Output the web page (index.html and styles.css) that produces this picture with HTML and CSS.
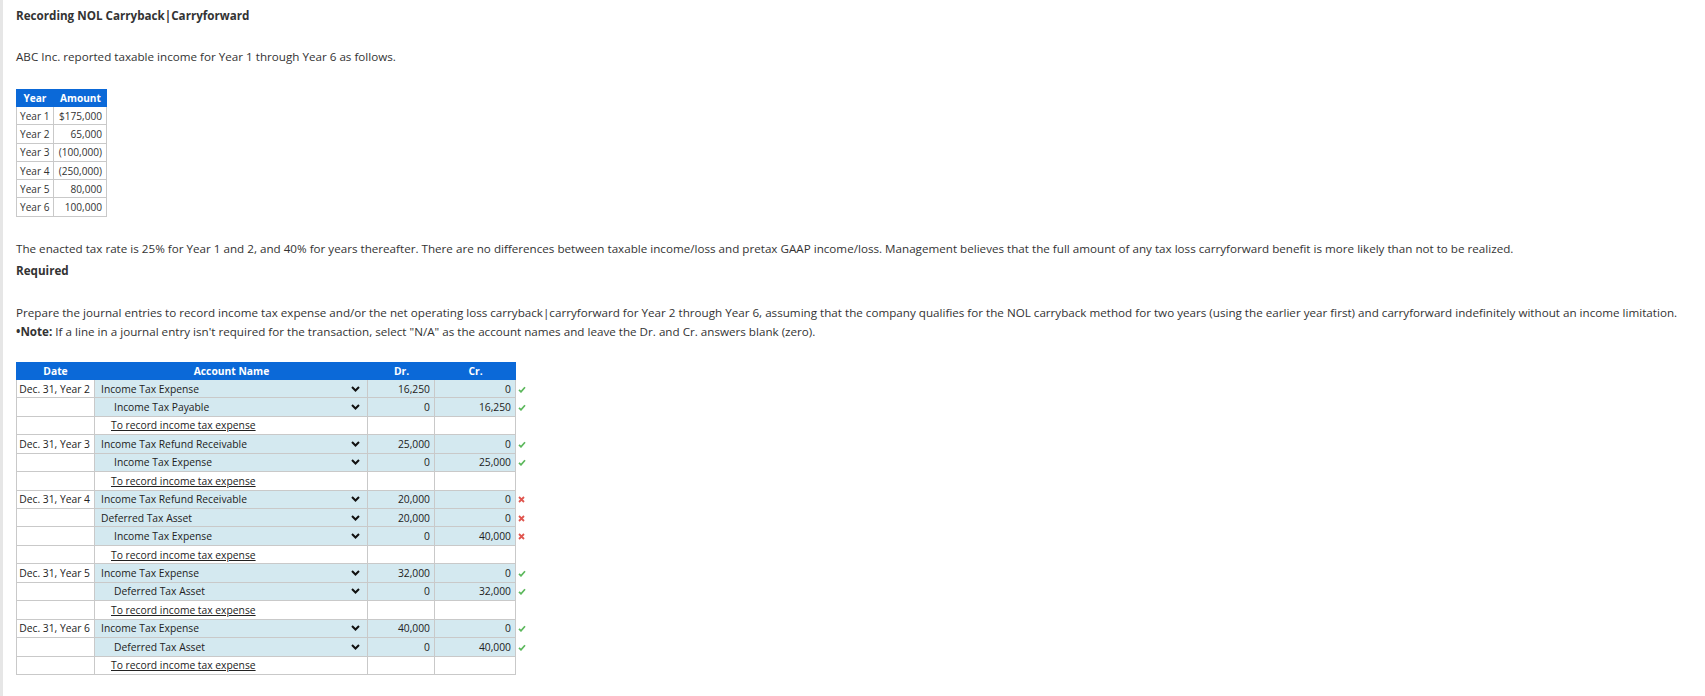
FILE: index.html
```html
<!DOCTYPE html>
<html lang="en">
<head>
<meta charset="utf-8">
<title>Recording NOL Carryback|Carryforward</title>
<link rel="stylesheet" href="styles.css">
</head>
<body>
<div class="frame">
  <h1 class="title">Recording NOL Carryback|Carryforward</h1>
  <p class="intro">ABC Inc. reported taxable income for Year 1 through Year 6 as follows.</p>

  <div class="income">
    <div class="ih">Year</div><div class="ih">Amount</div>
    <div class="ic yr">Year 1</div><div class="ic amt">$175,000</div>
    <div class="ic yr">Year 2</div><div class="ic amt">65,000</div>
    <div class="ic yr">Year 3</div><div class="ic amt">(100,000)</div>
    <div class="ic yr">Year 4</div><div class="ic amt">(250,000)</div>
    <div class="ic yr">Year 5</div><div class="ic amt">80,000</div>
    <div class="ic yr">Year 6</div><div class="ic amt">100,000</div>
  </div>

  <p class="rate">The enacted tax rate is 25% for Year 1 and 2, and 40% for years thereafter. There are no differences between taxable income/loss and pretax GAAP income/loss. Management believes that the full amount of any tax loss carryforward benefit is more likely than not to be realized.</p>
  <p class="req">Required</p>
  <p class="prepare">Prepare the journal entries to record income tax expense and/or the net operating loss carryback|carryforward for Year 2 through Year 6, assuming that the company qualifies for the NOL carryback method for two years (using the earlier year first) and carryforward indefinitely without an income limitation.<br><b>•Note:</b> If a line in a journal entry isn't required for the transaction, select "N/A" as the account names and leave the Dr. and Cr. answers blank (zero).</p>

  <div class="journal">
    <div class="jh">Date</div><div class="jh">Account Name</div><div class="jh">Dr.</div><div class="jh">Cr.</div><div class="mk"></div>

    <!-- Year 2 -->
    <div class="c date">Dec. 31, Year 2</div><div class="c acct">Income Tax Expense<svg class="chev" viewBox="0 0 9 6"><polyline points="1,1 4.5,4.5 8,1"/></svg></div><div class="c num">16,250</div><div class="c num">0</div><div class="mk"><svg class="ok" viewBox="0 0 8 7"><polyline points="1,3.8 3,5.8 7,1.2"/></svg></div>
    <div class="c date"></div><div class="c acct cr">Income Tax Payable<svg class="chev" viewBox="0 0 9 6"><polyline points="1,1 4.5,4.5 8,1"/></svg></div><div class="c num">0</div><div class="c num">16,250</div><div class="mk"><svg class="ok" viewBox="0 0 8 7"><polyline points="1,3.8 3,5.8 7,1.2"/></svg></div>
    <div class="c date"></div><div class="c memo"><span>To record income tax expense</span></div><div class="c blank"></div><div class="c blank"></div><div class="mk"></div>

    <!-- Year 3 -->
    <div class="c date">Dec. 31, Year 3</div><div class="c acct">Income Tax Refund Receivable<svg class="chev" viewBox="0 0 9 6"><polyline points="1,1 4.5,4.5 8,1"/></svg></div><div class="c num">25,000</div><div class="c num">0</div><div class="mk"><svg class="ok" viewBox="0 0 8 7"><polyline points="1,3.8 3,5.8 7,1.2"/></svg></div>
    <div class="c date"></div><div class="c acct cr">Income Tax Expense<svg class="chev" viewBox="0 0 9 6"><polyline points="1,1 4.5,4.5 8,1"/></svg></div><div class="c num">0</div><div class="c num">25,000</div><div class="mk"><svg class="ok" viewBox="0 0 8 7"><polyline points="1,3.8 3,5.8 7,1.2"/></svg></div>
    <div class="c date"></div><div class="c memo"><span>To record income tax expense</span></div><div class="c blank"></div><div class="c blank"></div><div class="mk"></div>

    <!-- Year 4 -->
    <div class="c date">Dec. 31, Year 4</div><div class="c acct">Income Tax Refund Receivable<svg class="chev" viewBox="0 0 9 6"><polyline points="1,1 4.5,4.5 8,1"/></svg></div><div class="c num">20,000</div><div class="c num">0</div><div class="mk"><svg class="bad" viewBox="0 0 7 7"><path d="M1,1 L6,6 M6,1 L1,6"/></svg></div>
    <div class="c date"></div><div class="c acct">Deferred Tax Asset<svg class="chev" viewBox="0 0 9 6"><polyline points="1,1 4.5,4.5 8,1"/></svg></div><div class="c num">20,000</div><div class="c num">0</div><div class="mk"><svg class="bad" viewBox="0 0 7 7"><path d="M1,1 L6,6 M6,1 L1,6"/></svg></div>
    <div class="c date"></div><div class="c acct cr">Income Tax Expense<svg class="chev" viewBox="0 0 9 6"><polyline points="1,1 4.5,4.5 8,1"/></svg></div><div class="c num">0</div><div class="c num">40,000</div><div class="mk"><svg class="bad" viewBox="0 0 7 7"><path d="M1,1 L6,6 M6,1 L1,6"/></svg></div>
    <div class="c date"></div><div class="c memo"><span>To record income tax expense</span></div><div class="c blank"></div><div class="c blank"></div><div class="mk"></div>

    <!-- Year 5 -->
    <div class="c date">Dec. 31, Year 5</div><div class="c acct">Income Tax Expense<svg class="chev" viewBox="0 0 9 6"><polyline points="1,1 4.5,4.5 8,1"/></svg></div><div class="c num">32,000</div><div class="c num">0</div><div class="mk"><svg class="ok" viewBox="0 0 8 7"><polyline points="1,3.8 3,5.8 7,1.2"/></svg></div>
    <div class="c date"></div><div class="c acct cr">Deferred Tax Asset<svg class="chev" viewBox="0 0 9 6"><polyline points="1,1 4.5,4.5 8,1"/></svg></div><div class="c num">0</div><div class="c num">32,000</div><div class="mk"><svg class="ok" viewBox="0 0 8 7"><polyline points="1,3.8 3,5.8 7,1.2"/></svg></div>
    <div class="c date"></div><div class="c memo"><span>To record income tax expense</span></div><div class="c blank"></div><div class="c blank"></div><div class="mk"></div>

    <!-- Year 6 -->
    <div class="c date">Dec. 31, Year 6</div><div class="c acct">Income Tax Expense<svg class="chev" viewBox="0 0 9 6"><polyline points="1,1 4.5,4.5 8,1"/></svg></div><div class="c num">40,000</div><div class="c num">0</div><div class="mk"><svg class="ok" viewBox="0 0 8 7"><polyline points="1,3.8 3,5.8 7,1.2"/></svg></div>
    <div class="c date"></div><div class="c acct cr">Deferred Tax Asset<svg class="chev" viewBox="0 0 9 6"><polyline points="1,1 4.5,4.5 8,1"/></svg></div><div class="c num">0</div><div class="c num">40,000</div><div class="mk"><svg class="ok" viewBox="0 0 8 7"><polyline points="1,3.8 3,5.8 7,1.2"/></svg></div>
    <div class="c date"></div><div class="c memo"><span>To record income tax expense</span></div><div class="c blank"></div><div class="c blank"></div><div class="mk"></div>
  </div>
</div>
</body>
</html>
```

FILE: styles.css
```css
html, body {
  margin: 0;
  padding: 0;
  background: #fff;
}

body {
  font-family: "Open Sans", "Noto Sans", sans-serif;
  color: #333;
}

.frame {
  box-sizing: border-box;
  min-height: 696px;
  border-left: 3px solid #e6e6e6;
  padding: 8px 0 0 13px;
}

.title {
  margin: 0;
  font-size: 11.65px;
  line-height: 16px;
  font-weight: 700;
  color: #333;
}

.intro {
  margin: 25px 0 0;
  font-size: 11.65px;
  line-height: 16px;
}

/* small income table */
.income {
  margin-top: 24px;
  display: grid;
  grid-template-columns: 38px 53px;
  grid-template-rows: 18px;
  grid-auto-rows: 18.3px;
  width: 91px;
  font-size: 10.1px;
}

.ih {
  background: #0b69d8;
  color: #fff;
  font-weight: 700;
  display: flex;
  align-items: center;
  justify-content: center;
}

.ic {
  box-sizing: border-box;
  border-right: 1px solid #c9c9c9;
  border-bottom: 1px solid #c9c9c9;
  display: flex;
  align-items: center;
  white-space: nowrap;
  color: #333;
}

.ic.yr {
  border-left: 1px solid #c9c9c9;
  padding-left: 3px;
}

.ic.amt {
  justify-content: flex-end;
  padding-right: 4px;
}

.rate {
  margin: 24px 0 0;
  font-size: 11.65px;
  line-height: 16px;
}

.req {
  margin: 6px 0 0;
  font-size: 11.65px;
  line-height: 16px;
  font-weight: 700;
}

.prepare {
  margin: 24px 0 0;
  font-size: 11.65px;
  line-height: 19px;
}

.prepare b {
  font-weight: 700;
}

/* journal */
.journal {
  margin-top: 21px;
  display: grid;
  grid-template-columns: 79px 273px 67px 81px 20px;
  grid-template-rows: 18px;
  grid-auto-rows: 18.46px;
  width: 520px;
  font-size: 10.3px;
  color: #222;
}

.jh {
  background: #0b69d8;
  color: #fff;
  font-weight: 700;
  display: flex;
  align-items: center;
  justify-content: center;
}

.c {
  box-sizing: border-box;
  border-right: 1px solid #c9c9c9;
  border-bottom: 1px solid #c9c9c9;
  display: flex;
  align-items: center;
  white-space: nowrap;
  overflow: hidden;
}

.c.date {
  border-left: 1px solid #c9c9c9;
  background: #fff;
  justify-content: flex-end;
  padding-right: 4px;
}

.c.acct {
  background: #d4e9f0;
  padding: 0 7px 0 6px;
  justify-content: space-between;
}

.c.acct.cr {
  padding-left: 19px;
}

.c.memo {
  background: #fff;
  padding-left: 16px;
}

.c.memo span {
  text-decoration: underline;
}

.c.num {
  background: #d4e9f0;
  justify-content: flex-end;
  padding-right: 4px;
}

.c.blank {
  background: #fff;
}

.chev {
  width: 9px;
  height: 6px;
  flex: none;
}

.chev polyline {
  fill: none;
  stroke: #111;
  stroke-width: 2;
}

.mk {
  display: flex;
  align-items: center;
  padding-left: 2px;
}

.ok {
  width: 8px;
  height: 7px;
}

.ok polyline {
  fill: none;
  stroke: #5cb85c;
  stroke-width: 1.7;
}

.bad {
  width: 7px;
  height: 7px;
}

.bad path {
  fill: none;
  stroke: #e0564f;
  stroke-width: 1.8;
}
```
